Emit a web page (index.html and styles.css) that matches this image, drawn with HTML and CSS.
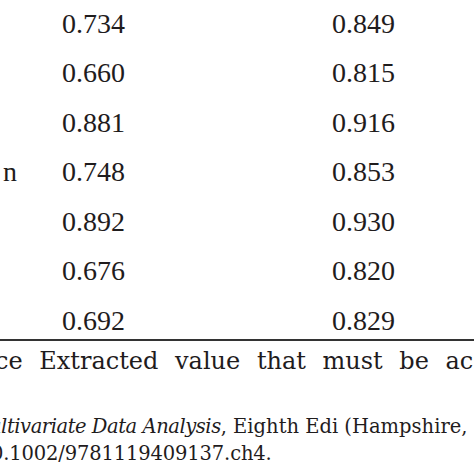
FILE: index.html
```html
<!DOCTYPE html>
<html lang="en">
<head>
    <meta charset="UTF-8">
    <meta name="viewport" content="width=device-width, initial-scale=1.0">
    <title>Reliability table</title>
    <link rel="stylesheet" href="styles.css">
</head>
<body>
    <div class="page">
        <div class="table">
            <div class="row"><span class="label"></span><span>0.734</span><span>0.849</span></div>
            <div class="row"><span class="label"></span><span>0.660</span><span>0.815</span></div>
            <div class="row"><span class="label"></span><span>0.881</span><span>0.916</span></div>
            <div class="row"><span class="label">n</span><span>0.748</span><span>0.853</span></div>
            <div class="row"><span class="label"></span><span>0.892</span><span>0.930</span></div>
            <div class="row"><span class="label"></span><span>0.676</span><span>0.820</span></div>
            <div class="row"><span class="label"></span><span>0.692</span><span>0.829</span></div>
        </div>

        <p class="note">ce Extracted value that must be ac</p>

        <p class="source">
            <span class="line first"><em>ultivariate Data Analysis</em>, Eighth Edi (Hampshire,</span>
            <span class="line second">0.1002/9781119409137.ch4.</span>
        </p>
    </div>
</body>
</html>
```

FILE: styles.css
```css
body {
    margin: 0;
    background: #fff;
    color: #1f1c1d;
}
.page {
    width: 474px;
    height: 474px;
    overflow: hidden;
}
.table {
    margin-top: -1.5px;
    border-bottom: 2px solid #333;
    font-family: "Liberation Serif", serif;
    font-size: 28px;
}
.row {
    display: grid;
    grid-template-columns: 62px 270px 1fr;
    line-height: 32px;
    padding: 9px 0 8.5px;
}
.row:last-child {
    padding-bottom: 2px;
}
.label {
    padding-left: 3px;
}
.note {
    margin: 6px 0 0;
    font-family: "DejaVu Serif", serif;
    font-size: 24px;
    line-height: 28px;
    white-space: nowrap;
    word-spacing: 9px;
    text-indent: -5px;
}
.note::first-letter {
    letter-spacing: 0;
}
.source {
    margin: 38px 0 0;
    font-family: "DejaVu Serif", serif;
    font-size: 19.5px;
    line-height: 27px;
    white-space: nowrap;
}
.line {
    display: block;
}
.first {
    text-indent: -11px;
}
.first em {
    letter-spacing: -0.45px;
}
.second {
    text-indent: -9px;
    letter-spacing: -0.15px;
}
```
